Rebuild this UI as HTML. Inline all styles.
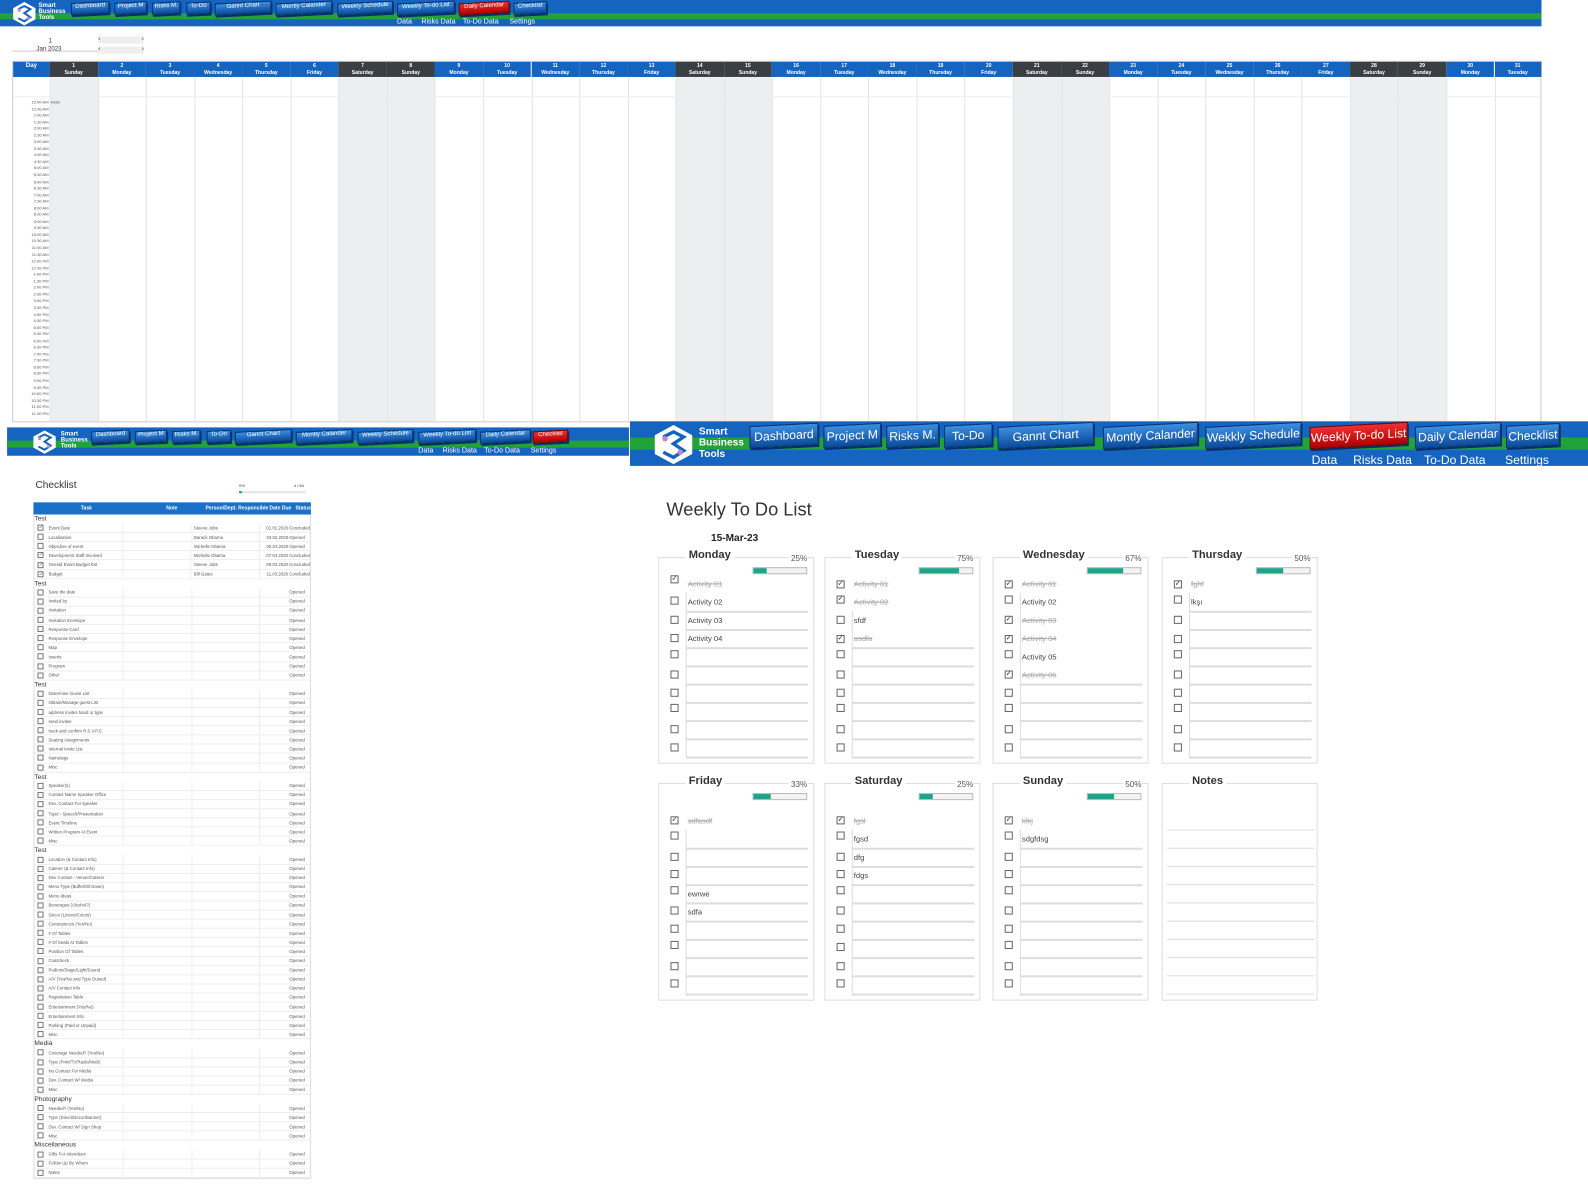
<!DOCTYPE html>
<html><head><meta charset="utf-8"><style>
*{margin:0;padding:0;box-sizing:border-box}
body{width:1588px;height:1191px;background:#fff;position:relative;overflow:hidden;font-family:"Liberation Sans",sans-serif;color:#333}
#w{position:absolute;left:0;top:0;width:1568px;height:1176px;transform:scale(1.0128);transform-origin:0 0}
.a{position:absolute}
.hdr{position:absolute;background:#1565c0;overflow:hidden}
.hdr .g{position:absolute;left:0;right:0;background:#22a33a}
.btn{position:absolute;background:linear-gradient(#3d8fe0,#0b4a9c);border:1px solid #0a3470;color:#fff;text-align:center;white-space:nowrap;box-shadow:1px 2px 0 #06306a;transform:skewY(-3deg);overflow:hidden}
.btn.red{background:linear-gradient(#f03030,#b00000);border-color:#700}
.lnk{position:absolute;color:#fff;white-space:nowrap}
.logo{position:absolute}
.lt{position:absolute;color:#fff;font-weight:bold;line-height:1}
.cal{position:absolute;left:12px;top:60px;width:1510px;height:357px;border:1px solid #ccc}
.ch{position:absolute;top:0;height:15px;background:#1565c0;color:#fff;text-align:center;font-size:5px;font-weight:bold;line-height:7px;padding-top:1px}
.ch.w{background:#3a3f44}
.cb{position:absolute;top:15px;bottom:0;border-left:1px solid #e4e4e4}
.cb.w{background:#eceef0}
.tl{position:absolute;left:8px;top:37px;font-size:4px;line-height:6.55px;color:#555;text-align:right;width:27px}
.ck{font-size:6px;position:absolute;left:33px;top:496px;width:274px}
.ck .h{background:#1a6fc9;color:#fff;height:12px;font-weight:bold;font-size:5px;display:flex;align-items:center}
.r{height:9.1px;display:flex;align-items:center;font-size:4.3px;color:#555;border-bottom:1px solid #eee}
.sec{height:9.1px;font-size:6.5px;color:#333;line-height:9.1px}
.r .x{width:6px;height:6px;border:0.8px solid #777;margin-left:3px;margin-right:5px;font-size:5px;line-height:5px;text-align:center}
.r .t{width:76px;border-right:1px solid #eee;height:100%;display:flex;align-items:center}
.r .n{width:70px;border-right:1px solid #eee;height:100%}
.r .p{width:70px;border-right:1px solid #eee;height:100%;display:flex;align-items:center;padding-left:2px}
.r .d{width:28px;text-align:right}
.r .s{width:22px;padding-left:1px}
.card{position:absolute;border:1.5px solid #ddd;width:154px}
.card .ti{position:absolute;left:26px;top:-9px;background:#fff;padding:0 3px;font-size:11px;font-weight:bold;color:#333}
.card .pc{position:absolute;right:6px;top:-4px;background:#fff;font-size:8px;color:#555;padding-left:2px}
.card .bar{position:absolute;left:92px;top:9px;width:54px;height:7px;border:1px solid #bbb;background:#f3f3f3}
.card .bar i{display:block;height:100%;background:#1fa38a}
.card .vl{position:absolute;left:26px;width:1px;background:#ddd}
.card .hl{position:absolute;left:26px;width:121px;height:1.5px;background:#ddd}
.card .cx{position:absolute;left:11px;width:8px;height:8px;border:1px solid #666;font-size:7px;line-height:6px;text-align:center;color:#222}
.card .it{position:absolute;left:28px;font-size:7.5px;color:#444}
.card .it.d{text-decoration:line-through;color:#aaa}
</style></head><body><div id="w">

<!-- top small header -->
<div class="hdr" style="left:0;top:0;width:1522px;height:26px">
<div class="g" style="top:13px;height:6px"></div>
<svg class="logo" style="left:12px;top:1px" width="24" height="25" viewBox="0 0 24 25"><path d="M12 1 L23 7 L23 18 L12 24 L1 18 L1 7Z" fill="#fff"/><path d="M6 8 L12 5 L18 8 L12 12 L18 16 L12 20 L6 17" fill="none" stroke="#1565c0" stroke-width="2"/><circle cx="7" cy="9" r="1.6" fill="#b58ad0"/><circle cx="16" cy="17" r="1.6" fill="#b58ad0"/></svg>
<div class="lt" style="left:38px;top:3px;font-size:6px">Smart<br>Business<br>Tools</div>
<div class="btn" style="left:70px;top:2px;width:38px;height:12px;font-size:6px">Dashboard</div>
<div class="btn" style="left:113px;top:2px;width:32px;height:12px;font-size:6px">Project M</div>
<div class="btn" style="left:150px;top:2px;width:28px;height:12px;font-size:6px">Risks M.</div>
<div class="btn" style="left:184px;top:2px;width:24px;height:12px;font-size:6px">To-Do</div>
<div class="btn" style="left:212px;top:2px;width:56px;height:12px;font-size:6px">Gannt Chart</div>
<div class="btn" style="left:272px;top:2px;width:56px;height:12px;font-size:6px">Montly Calander</div>
<div class="btn" style="left:333px;top:2px;width:55px;height:12px;font-size:6px">Weekly Schedule</div>
<div class="btn" style="left:392px;top:2px;width:57px;height:12px;font-size:6px">Weekly To-do List</div>
<div class="btn red" style="left:453px;top:2px;width:50px;height:12px;font-size:6px">Daily Calendar</div>
<div class="btn" style="left:507px;top:2px;width:33px;height:12px;font-size:6px">Checklist</div>
<div class="lnk" style="left:392px;top:18px;font-size:7px">Data</div>
<div class="lnk" style="left:416px;top:18px;font-size:7px">Risks Data</div>
<div class="lnk" style="left:457px;top:18px;font-size:7px">To-Do Data</div>
<div class="lnk" style="left:503px;top:18px;font-size:7px">Settings</div>
</div>

<div class="a" style="left:48px;top:38px;font-size:6px">1</div>
<div class="a" style="left:12px;top:50px;width:85px;border-top:1px solid #ccc"></div>
<div class="a" style="left:36px;top:46px;font-size:6px">Jan 2023</div>
<div class="a" style="left:97px;top:36px;width:45px;height:7px;background:#eee;font-size:6px;line-height:7px">&lsaquo;<span style="float:right">&rsaquo;</span></div>
<div class="a" style="left:97px;top:46px;width:45px;height:7px;background:#eee;font-size:6px;line-height:7px">&lsaquo;<span style="float:right">&rsaquo;</span></div>

<div class="cal">
<div class="ch" style="left:0;width:36px;font-size:6px">Day</div>
<div class="ch w" style="left:36px;width:47.55px">1<br>Sunday</div><div class="cb w" style="left:36px;width:47.55px"></div>
<div class="ch" style="left:83.55px;width:47.55px">2<br>Monday</div><div class="cb" style="left:83.55px;width:47.55px"></div>
<div class="ch" style="left:131.1px;width:47.55px">3<br>Tuesday</div><div class="cb" style="left:131.1px;width:47.55px"></div>
<div class="ch" style="left:178.65px;width:47.55px">4<br>Wednesday</div><div class="cb" style="left:178.65px;width:47.55px"></div>
<div class="ch" style="left:226.2px;width:47.55px">5<br>Thursday</div><div class="cb" style="left:226.2px;width:47.55px"></div>
<div class="ch" style="left:273.75px;width:47.55px">6<br>Friday</div><div class="cb" style="left:273.75px;width:47.55px"></div>
<div class="ch w" style="left:321.3px;width:47.55px">7<br>Saturday</div><div class="cb w" style="left:321.3px;width:47.55px"></div>
<div class="ch w" style="left:368.85px;width:47.55px">8<br>Sunday</div><div class="cb w" style="left:368.85px;width:47.55px"></div>
<div class="ch" style="left:416.4px;width:47.55px">9<br>Monday</div><div class="cb" style="left:416.4px;width:47.55px"></div>
<div class="ch" style="left:463.95px;width:47.55px">10<br>Tuesday</div><div class="cb" style="left:463.95px;width:47.55px"></div>
<div class="ch" style="left:511.5px;width:47.55px">11<br>Wednesday</div><div class="cb" style="left:511.5px;width:47.55px"></div>
<div class="ch" style="left:559.05px;width:47.55px">12<br>Thursday</div><div class="cb" style="left:559.05px;width:47.55px"></div>
<div class="ch" style="left:606.6px;width:47.55px">13<br>Friday</div><div class="cb" style="left:606.6px;width:47.55px"></div>
<div class="ch w" style="left:654.15px;width:47.55px">14<br>Saturday</div><div class="cb w" style="left:654.15px;width:47.55px"></div>
<div class="ch w" style="left:701.7px;width:47.55px">15<br>Sunday</div><div class="cb w" style="left:701.7px;width:47.55px"></div>
<div class="ch" style="left:749.25px;width:47.55px">16<br>Monday</div><div class="cb" style="left:749.25px;width:47.55px"></div>
<div class="ch" style="left:796.8px;width:47.55px">17<br>Tuesday</div><div class="cb" style="left:796.8px;width:47.55px"></div>
<div class="ch" style="left:844.35px;width:47.55px">18<br>Wednesday</div><div class="cb" style="left:844.35px;width:47.55px"></div>
<div class="ch" style="left:891.9px;width:47.55px">19<br>Thursday</div><div class="cb" style="left:891.9px;width:47.55px"></div>
<div class="ch" style="left:939.45px;width:47.55px">20<br>Friday</div><div class="cb" style="left:939.45px;width:47.55px"></div>
<div class="ch w" style="left:987px;width:47.55px">21<br>Saturday</div><div class="cb w" style="left:987px;width:47.55px"></div>
<div class="ch w" style="left:1034.55px;width:47.55px">22<br>Sunday</div><div class="cb w" style="left:1034.55px;width:47.55px"></div>
<div class="ch" style="left:1082.1px;width:47.55px">23<br>Monday</div><div class="cb" style="left:1082.1px;width:47.55px"></div>
<div class="ch" style="left:1129.65px;width:47.55px">24<br>Tuesday</div><div class="cb" style="left:1129.65px;width:47.55px"></div>
<div class="ch" style="left:1177.2px;width:47.55px">25<br>Wednesday</div><div class="cb" style="left:1177.2px;width:47.55px"></div>
<div class="ch" style="left:1224.75px;width:47.55px">26<br>Thursday</div><div class="cb" style="left:1224.75px;width:47.55px"></div>
<div class="ch" style="left:1272.3px;width:47.55px">27<br>Friday</div><div class="cb" style="left:1272.3px;width:47.55px"></div>
<div class="ch w" style="left:1319.85px;width:47.55px">28<br>Saturday</div><div class="cb w" style="left:1319.85px;width:47.55px"></div>
<div class="ch w" style="left:1367.4px;width:47.55px">29<br>Sunday</div><div class="cb w" style="left:1367.4px;width:47.55px"></div>
<div class="ch" style="left:1414.95px;width:47.55px">30<br>Monday</div><div class="cb" style="left:1414.95px;width:47.55px"></div>
<div class="ch" style="left:1462.5px;width:46px">31<br>Tuesday</div><div class="cb" style="left:1462.5px;width:46px"></div>
<div class="a" style="left:0;top:34px;width:1508px;border-top:1px solid #eee"></div>
<div class="tl">12:00 AM<br>12:30 AM<br>1:00 AM<br>1:30 AM<br>2:00 AM<br>2:30 AM<br>3:00 AM<br>3:30 AM<br>4:00 AM<br>4:30 AM<br>5:00 AM<br>5:30 AM<br>6:00 AM<br>6:30 AM<br>7:00 AM<br>7:30 AM<br>8:00 AM<br>8:30 AM<br>9:00 AM<br>9:30 AM<br>10:00 AM<br>10:30 AM<br>11:00 AM<br>11:30 AM<br>12:00 PM<br>12:30 PM<br>1:00 PM<br>1:30 PM<br>2:00 PM<br>2:30 PM<br>3:00 PM<br>3:30 PM<br>4:00 PM<br>4:30 PM<br>5:00 PM<br>5:30 PM<br>6:00 PM<br>6:30 PM<br>7:00 PM<br>7:30 PM<br>8:00 PM<br>8:30 PM<br>9:00 PM<br>9:30 PM<br>10:00 PM<br>10:30 PM<br>11:00 PM<br>11:30 PM</div>
<div class="a" style="left:37px;top:37px;font-size:4px;color:#555">Hello</div>
</div>

<!-- second small header -->
<div class="hdr" style="left:7px;top:422px;width:614px;height:28px">
<div class="g" style="top:13px;height:7px"></div>
<svg class="logo" style="left:25px;top:2px" width="24" height="25" viewBox="0 0 24 25"><path d="M12 1 L23 7 L23 18 L12 24 L1 18 L1 7Z" fill="#fff"/><path d="M6 8 L12 5 L18 8 L12 12 L18 16 L12 20 L6 17" fill="none" stroke="#1565c0" stroke-width="2"/><circle cx="7" cy="9" r="1.6" fill="#b58ad0"/><circle cx="16" cy="17" r="1.6" fill="#b58ad0"/></svg>
<div class="lt" style="left:53px;top:4px;font-size:6px">Smart<br>Business<br>Tools</div>
<div class="btn" style="left:83px;top:3px;width:38px;height:12px;font-size:6px">Dashboard</div>
<div class="btn" style="left:126px;top:3px;width:32px;height:12px;font-size:6px">Project M</div>
<div class="btn" style="left:163px;top:3px;width:28px;height:12px;font-size:6px">Risks M.</div>
<div class="btn" style="left:197px;top:3px;width:24px;height:12px;font-size:6px">To-Do</div>
<div class="btn" style="left:225px;top:3px;width:56px;height:12px;font-size:6px">Gannt Chart</div>
<div class="btn" style="left:285px;top:3px;width:56px;height:12px;font-size:6px">Montly Calander</div>
<div class="btn" style="left:346px;top:3px;width:55px;height:12px;font-size:6px">Weekly Schedule</div>
<div class="btn" style="left:406px;top:3px;width:57px;height:12px;font-size:6px">Weekly To-do List</div>
<div class="btn" style="left:467px;top:3px;width:50px;height:12px;font-size:6px">Daily Calendar</div>
<div class="btn red" style="left:519px;top:3px;width:35px;height:12px;font-size:6px">Checklist</div>
<div class="lnk" style="left:406px;top:20px;font-size:7px">Data</div>
<div class="lnk" style="left:430px;top:20px;font-size:7px">Risks Data</div>
<div class="lnk" style="left:471px;top:20px;font-size:7px">To-Do Data</div>
<div class="lnk" style="left:517px;top:20px;font-size:7px">Settings</div>
</div>

<!-- big header -->
<div class="hdr" style="left:622px;top:416px;width:946px;height:44px">
<div class="g" style="top:16px;height:12px"></div>
<svg class="logo" style="left:22px;top:2px" width="42" height="42" viewBox="0 0 24 25"><path d="M12 1 L23 7 L23 18 L12 24 L1 18 L1 7Z" fill="#fff"/><path d="M6 8 L12 5 L18 8 L12 12 L18 16 L12 20 L6 17" fill="none" stroke="#1565c0" stroke-width="2"/><circle cx="7" cy="9" r="1.6" fill="#b58ad0"/><circle cx="16" cy="17" r="1.6" fill="#b58ad0"/></svg>
<div class="lt" style="left:68px;top:5px;font-size:10px;line-height:11px">Smart<br>Business<br>Tools</div>
<div class="btn" style="left:118px;top:3px;width:68px;height:22px;font-size:12px;line-height:20px">Dashboard</div>
<div class="btn" style="left:191px;top:3px;width:57px;height:22px;font-size:12px;line-height:20px">Project M</div>
<div class="btn" style="left:253px;top:3px;width:52px;height:22px;font-size:12px;line-height:20px">Risks M.</div>
<div class="btn" style="left:310px;top:3px;width:48px;height:22px;font-size:12px;line-height:20px">To-Do</div>
<div class="btn" style="left:363px;top:3px;width:95px;height:22px;font-size:12px;line-height:20px">Gannt Chart</div>
<div class="btn" style="left:467px;top:3px;width:94px;height:22px;font-size:12px;line-height:20px">Montly Calander</div>
<div class="btn" style="left:568px;top:3px;width:95px;height:22px;font-size:12px;line-height:20px">Wekkly Schedule</div>
<div class="btn red" style="left:671px;top:3px;width:97px;height:22px;font-size:12px;line-height:20px">Weekly To-do List</div>
<div class="btn" style="left:775px;top:3px;width:85px;height:22px;font-size:12px;line-height:20px">Daily Calendar</div>
<div class="btn" style="left:865px;top:3px;width:53px;height:22px;font-size:12px;line-height:20px">Checklist</div>
<div class="lnk" style="left:673px;top:31px;font-size:12px">Data</div>
<div class="lnk" style="left:714px;top:31px;font-size:12px">Risks Data</div>
<div class="lnk" style="left:784px;top:31px;font-size:12px">To-Do Data</div>
<div class="lnk" style="left:864px;top:31px;font-size:12px">Settings</div>
</div>

<!-- checklist -->
<div class="a" style="left:35px;top:474px;font-size:10px;color:#333">Checklist</div>
<div class="a" style="left:236px;top:477px;font-size:4px">0%</div>
<div class="a" style="left:290px;top:477px;font-size:4px">4 / 64</div>
<div class="a" style="left:236px;top:485px;width:66px;height:2px;background:#e5e5e5"><div style="width:3px;height:2px;background:#1fa38a"></div></div>
<div class="ck">
<div class="h"><span style="width:114px;text-align:center">Task</span><span style="width:70px;text-align:center">Note</span><span style="width:70px;text-align:center">Person/Dept. Responsible</span><span style="width:28px">Date Due</span><span>Status</span></div>
<div style="border:1px solid #ddd;border-top:0">
<div class="sec">Test</div>
<div class="r"><i class="x">✓</i><span class="t">Event Date</span><span class="n"></span><span class="p">Steeve Jobs</span><span class="d">01.01.2020</span><span class="s">Concluded</span></div>
<div class="r"><i class="x"></i><span class="t">Localisation</span><span class="n"></span><span class="p">Barack Obama</span><span class="d">03.02.2020</span><span class="s">Opened</span></div>
<div class="r"><i class="x"></i><span class="t">Objective of event</span><span class="n"></span><span class="p">Michelle Obama</span><span class="d">05.03.2020</span><span class="s">Opened</span></div>
<div class="r"><i class="x">✓</i><span class="t">Development Staff Involved</span><span class="n"></span><span class="p">Michelle Obama</span><span class="d">07.03.2020</span><span class="s">Concluded</span></div>
<div class="r"><i class="x">✓</i><span class="t">Overall Event Budget Est</span><span class="n"></span><span class="p">Steeve Jobs</span><span class="d">09.03.2020</span><span class="s">Concluded</span></div>
<div class="r"><i class="x">✓</i><span class="t">Budget</span><span class="n"></span><span class="p">Bill Gates</span><span class="d">11.03.2020</span><span class="s">Concluded</span></div>
<div class="sec">Test</div>
<div class="r"><i class="x"></i><span class="t">Save the date</span><span class="n"></span><span class="p"></span><span class="d"></span><span class="s">Opened</span></div>
<div class="r"><i class="x"></i><span class="t">Invited by</span><span class="n"></span><span class="p"></span><span class="d"></span><span class="s">Opened</span></div>
<div class="r"><i class="x"></i><span class="t">Invitation</span><span class="n"></span><span class="p"></span><span class="d"></span><span class="s">Opened</span></div>
<div class="r"><i class="x"></i><span class="t">Invitation Envelope</span><span class="n"></span><span class="p"></span><span class="d"></span><span class="s">Opened</span></div>
<div class="r"><i class="x"></i><span class="t">Response Card</span><span class="n"></span><span class="p"></span><span class="d"></span><span class="s">Opened</span></div>
<div class="r"><i class="x"></i><span class="t">Response Envelope</span><span class="n"></span><span class="p"></span><span class="d"></span><span class="s">Opened</span></div>
<div class="r"><i class="x"></i><span class="t">Map</span><span class="n"></span><span class="p"></span><span class="d"></span><span class="s">Opened</span></div>
<div class="r"><i class="x"></i><span class="t">Inserts</span><span class="n"></span><span class="p"></span><span class="d"></span><span class="s">Opened</span></div>
<div class="r"><i class="x"></i><span class="t">Program</span><span class="n"></span><span class="p"></span><span class="d"></span><span class="s">Opened</span></div>
<div class="r"><i class="x"></i><span class="t">Other</span><span class="n"></span><span class="p"></span><span class="d"></span><span class="s">Opened</span></div>
<div class="sec">Test</div>
<div class="r"><i class="x"></i><span class="t">Determine Guest List</span><span class="n"></span><span class="p"></span><span class="d"></span><span class="s">Opened</span></div>
<div class="r"><i class="x"></i><span class="t">Obtain/Manage guest List</span><span class="n"></span><span class="p"></span><span class="d"></span><span class="s">Opened</span></div>
<div class="r"><i class="x"></i><span class="t">address invites hand or type</span><span class="n"></span><span class="p"></span><span class="d"></span><span class="s">Opened</span></div>
<div class="r"><i class="x"></i><span class="t">send invites</span><span class="n"></span><span class="p"></span><span class="d"></span><span class="s">Opened</span></div>
<div class="r"><i class="x"></i><span class="t">track and confirm R.S.V.P.S</span><span class="n"></span><span class="p"></span><span class="d"></span><span class="s">Opened</span></div>
<div class="r"><i class="x"></i><span class="t">Seating Assignments</span><span class="n"></span><span class="p"></span><span class="d"></span><span class="s">Opened</span></div>
<div class="r"><i class="x"></i><span class="t">Internal Invite List</span><span class="n"></span><span class="p"></span><span class="d"></span><span class="s">Opened</span></div>
<div class="r"><i class="x"></i><span class="t">Nametags</span><span class="n"></span><span class="p"></span><span class="d"></span><span class="s">Opened</span></div>
<div class="r"><i class="x"></i><span class="t">Misc</span><span class="n"></span><span class="p"></span><span class="d"></span><span class="s">Opened</span></div>
<div class="sec">Test</div>
<div class="r"><i class="x"></i><span class="t">Speaker(s)</span><span class="n"></span><span class="p"></span><span class="d"></span><span class="s">Opened</span></div>
<div class="r"><i class="x"></i><span class="t">Contact Name Speaker Office</span><span class="n"></span><span class="p"></span><span class="d"></span><span class="s">Opened</span></div>
<div class="r"><i class="x"></i><span class="t">Dev. Contact For speaker</span><span class="n"></span><span class="p"></span><span class="d"></span><span class="s">Opened</span></div>
<div class="r"><i class="x"></i><span class="t">Topic - Speech/Presentation</span><span class="n"></span><span class="p"></span><span class="d"></span><span class="s">Opened</span></div>
<div class="r"><i class="x"></i><span class="t">Event Timeline</span><span class="n"></span><span class="p"></span><span class="d"></span><span class="s">Opened</span></div>
<div class="r"><i class="x"></i><span class="t">Written Program At Event</span><span class="n"></span><span class="p"></span><span class="d"></span><span class="s">Opened</span></div>
<div class="r"><i class="x"></i><span class="t">Misc</span><span class="n"></span><span class="p"></span><span class="d"></span><span class="s">Opened</span></div>
<div class="sec">Test</div>
<div class="r"><i class="x"></i><span class="t">Location (&amp; Contact Info)</span><span class="n"></span><span class="p"></span><span class="d"></span><span class="s">Opened</span></div>
<div class="r"><i class="x"></i><span class="t">Caterer (&amp; Contact Info)</span><span class="n"></span><span class="p"></span><span class="d"></span><span class="s">Opened</span></div>
<div class="r"><i class="x"></i><span class="t">Dev Contact - Venue/Caterer</span><span class="n"></span><span class="p"></span><span class="d"></span><span class="s">Opened</span></div>
<div class="r"><i class="x"></i><span class="t">Menu Type (Buffet/Sit Down)</span><span class="n"></span><span class="p"></span><span class="d"></span><span class="s">Opened</span></div>
<div class="r"><i class="x"></i><span class="t">Menu Ideas</span><span class="n"></span><span class="p"></span><span class="d"></span><span class="s">Opened</span></div>
<div class="r"><i class="x"></i><span class="t">Beverages (Alcohol?)</span><span class="n"></span><span class="p"></span><span class="d"></span><span class="s">Opened</span></div>
<div class="r"><i class="x"></i><span class="t">Décor (Linens/Colors)</span><span class="n"></span><span class="p"></span><span class="d"></span><span class="s">Opened</span></div>
<div class="r"><i class="x"></i><span class="t">Centerpieces (Yes/No)</span><span class="n"></span><span class="p"></span><span class="d"></span><span class="s">Opened</span></div>
<div class="r"><i class="x"></i><span class="t"># Of Tables</span><span class="n"></span><span class="p"></span><span class="d"></span><span class="s">Opened</span></div>
<div class="r"><i class="x"></i><span class="t"># Of Seats At Tables</span><span class="n"></span><span class="p"></span><span class="d"></span><span class="s">Opened</span></div>
<div class="r"><i class="x"></i><span class="t">Position Of Tables</span><span class="n"></span><span class="p"></span><span class="d"></span><span class="s">Opened</span></div>
<div class="r"><i class="x"></i><span class="t">Coatcheck</span><span class="n"></span><span class="p"></span><span class="d"></span><span class="s">Opened</span></div>
<div class="r"><i class="x"></i><span class="t">Podium/Stage/Light/Sound</span><span class="n"></span><span class="p"></span><span class="d"></span><span class="s">Opened</span></div>
<div class="r"><i class="x"></i><span class="t">A/V (Yes/No and Type Dused)</span><span class="n"></span><span class="p"></span><span class="d"></span><span class="s">Opened</span></div>
<div class="r"><i class="x"></i><span class="t">A/V Contact Info</span><span class="n"></span><span class="p"></span><span class="d"></span><span class="s">Opened</span></div>
<div class="r"><i class="x"></i><span class="t">Registration Table</span><span class="n"></span><span class="p"></span><span class="d"></span><span class="s">Opened</span></div>
<div class="r"><i class="x"></i><span class="t">Entertainment (Yes/No)</span><span class="n"></span><span class="p"></span><span class="d"></span><span class="s">Opened</span></div>
<div class="r"><i class="x"></i><span class="t">Entertainment Info</span><span class="n"></span><span class="p"></span><span class="d"></span><span class="s">Opened</span></div>
<div class="r"><i class="x"></i><span class="t">Parking (Paid or Unpaid)</span><span class="n"></span><span class="p"></span><span class="d"></span><span class="s">Opened</span></div>
<div class="r"><i class="x"></i><span class="t">Misc</span><span class="n"></span><span class="p"></span><span class="d"></span><span class="s">Opened</span></div>
<div class="sec">Media</div>
<div class="r"><i class="x"></i><span class="t">Coverage Needed? (Yes/No)</span><span class="n"></span><span class="p"></span><span class="d"></span><span class="s">Opened</span></div>
<div class="r"><i class="x"></i><span class="t">Type (Print/TV/Radio/Web)</span><span class="n"></span><span class="p"></span><span class="d"></span><span class="s">Opened</span></div>
<div class="r"><i class="x"></i><span class="t">Nu Contact For Media</span><span class="n"></span><span class="p"></span><span class="d"></span><span class="s">Opened</span></div>
<div class="r"><i class="x"></i><span class="t">Dev. Contact W/ Media</span><span class="n"></span><span class="p"></span><span class="d"></span><span class="s">Opened</span></div>
<div class="r"><i class="x"></i><span class="t">Misc</span><span class="n"></span><span class="p"></span><span class="d"></span><span class="s">Opened</span></div>
<div class="sec">Photography</div>
<div class="r"><i class="x"></i><span class="t">Needed? (Yes/No)</span><span class="n"></span><span class="p"></span><span class="d"></span><span class="s">Opened</span></div>
<div class="r"><i class="x"></i><span class="t">Type (Direct/Décor/Banner)</span><span class="n"></span><span class="p"></span><span class="d"></span><span class="s">Opened</span></div>
<div class="r"><i class="x"></i><span class="t">Dev. Contact W/ Sign Shop</span><span class="n"></span><span class="p"></span><span class="d"></span><span class="s">Opened</span></div>
<div class="r"><i class="x"></i><span class="t">Misc</span><span class="n"></span><span class="p"></span><span class="d"></span><span class="s">Opened</span></div>
<div class="sec">Miscellaneous</div>
<div class="r"><i class="x"></i><span class="t">Gifts For Attendees</span><span class="n"></span><span class="p"></span><span class="d"></span><span class="s">Opened</span></div>
<div class="r"><i class="x"></i><span class="t">Follow Up By Whom</span><span class="n"></span><span class="p"></span><span class="d"></span><span class="s">Opened</span></div>
<div class="r"><i class="x"></i><span class="t">Notes</span><span class="n"></span><span class="p"></span><span class="d"></span><span class="s">Opened</span></div>
</div></div>

<!-- weekly -->
<div class="a" style="left:658px;top:493px;font-size:18px;color:#333">Weekly To Do List</div>
<div class="a" style="left:702px;top:526px;font-size:10px;font-weight:bold;color:#222">15-Mar-23</div>

<div class="card" style="left:650px;top:550px;height:204px">
<div class="ti">Monday</div><div class="pc">25%</div><div class="bar"><i style="width:25%"></i></div>
<div class="vl" style="top:34px;height:162px"></div>
<div class="hl" style="top:52px"></div><div class="hl" style="top:70px"></div><div class="hl" style="top:88px"></div><div class="hl" style="top:106px"></div><div class="hl" style="top:124px"></div><div class="hl" style="top:142px"></div><div class="hl" style="top:160px"></div><div class="hl" style="top:178px"></div><div class="hl" style="top:196px"></div>
<div class="cx" style="top:17px">✓</div><div class="cx" style="top:38px"></div><div class="cx" style="top:57px"></div><div class="cx" style="top:75px"></div><div class="cx" style="top:91px"></div><div class="cx" style="top:111px"></div><div class="cx" style="top:129px"></div><div class="cx" style="top:144px"></div><div class="cx" style="top:165px"></div><div class="cx" style="top:183px"></div>
<div class="it d" style="top:21px">Activity 01</div><div class="it" style="top:39px">Activity 02</div><div class="it" style="top:57px">Activity 03</div><div class="it" style="top:75px">Activity 04</div>
</div>
<div class="card" style="left:814px;top:550px;height:204px">
<div class="ti">Tuesday</div><div class="pc">75%</div><div class="bar"><i style="width:75%"></i></div>
<div class="vl" style="top:52px;height:144px"></div>
<div class="hl" style="top:88px"></div><div class="hl" style="top:106px"></div><div class="hl" style="top:124px"></div><div class="hl" style="top:142px"></div><div class="hl" style="top:160px"></div><div class="hl" style="top:178px"></div><div class="hl" style="top:196px"></div>
<div class="cx" style="top:22px">✓</div><div class="cx" style="top:37px">✓</div><div class="cx" style="top:57px"></div><div class="cx" style="top:76px">✓</div><div class="cx" style="top:91px"></div><div class="cx" style="top:111px"></div><div class="cx" style="top:129px"></div><div class="cx" style="top:144px"></div><div class="cx" style="top:165px"></div><div class="cx" style="top:183px"></div>
<div class="it d" style="top:21px">Activity 01</div><div class="it d" style="top:39px">Activity 02</div><div class="it" style="top:57px">sfdf</div><div class="it d" style="top:75px">asdfa</div>
</div>
<div class="card" style="left:980px;top:550px;height:204px">
<div class="ti">Wednesday</div><div class="pc">67%</div><div class="bar"><i style="width:67%"></i></div>
<div class="vl" style="top:34px;height:162px"></div>
<div class="hl" style="top:124px"></div><div class="hl" style="top:142px"></div><div class="hl" style="top:160px"></div><div class="hl" style="top:178px"></div><div class="hl" style="top:196px"></div>
<div class="cx" style="top:22px">✓</div><div class="cx" style="top:37px"></div><div class="cx" style="top:57px">✓</div><div class="cx" style="top:76px">✓</div><div class="cx" style="top:91px"></div><div class="cx" style="top:111px">✓</div><div class="cx" style="top:129px"></div><div class="cx" style="top:144px"></div><div class="cx" style="top:165px"></div><div class="cx" style="top:183px"></div>
<div class="it d" style="top:21px">Activity 01</div><div class="it" style="top:39px">Activity 02</div><div class="it d" style="top:57px">Activity 03</div><div class="it d" style="top:75px">Activity 04</div><div class="it" style="top:93px">Activity 05</div><div class="it d" style="top:111px">Activity 06</div>
</div>
<div class="card" style="left:1147px;top:550px;height:204px">
<div class="ti">Thursday</div><div class="pc">50%</div><div class="bar"><i style="width:50%"></i></div>
<div class="vl" style="top:34px;height:162px"></div>
<div class="hl" style="top:52px"></div><div class="hl" style="top:70px"></div><div class="hl" style="top:88px"></div><div class="hl" style="top:106px"></div><div class="hl" style="top:124px"></div><div class="hl" style="top:142px"></div><div class="hl" style="top:160px"></div><div class="hl" style="top:178px"></div><div class="hl" style="top:196px"></div>
<div class="cx" style="top:22px">✓</div><div class="cx" style="top:37px"></div><div class="cx" style="top:57px"></div><div class="cx" style="top:76px"></div><div class="cx" style="top:91px"></div><div class="cx" style="top:111px"></div><div class="cx" style="top:129px"></div><div class="cx" style="top:144px"></div><div class="cx" style="top:165px"></div><div class="cx" style="top:183px"></div>
<div class="it d" style="top:21px">fghf</div><div class="it" style="top:39px">lkşı</div>
</div>

<div class="card" style="left:650px;top:773px;height:215px">
<div class="ti">Friday</div><div class="pc">33%</div><div class="bar"><i style="width:33%"></i></div>
<div class="vl" style="top:45px;height:162px"></div>
<div class="hl" style="top:63px"></div><div class="hl" style="top:81px"></div><div class="hl" style="top:99px"></div><div class="hl" style="top:117px"></div><div class="hl" style="top:135px"></div><div class="hl" style="top:153px"></div><div class="hl" style="top:171px"></div><div class="hl" style="top:189px"></div><div class="hl" style="top:207px"></div>
<div class="cx" style="top:32px">✓</div><div class="cx" style="top:47px"></div><div class="cx" style="top:68px"></div><div class="cx" style="top:85px"></div><div class="cx" style="top:101px"></div><div class="cx" style="top:121px"></div><div class="cx" style="top:139px"></div><div class="cx" style="top:155px"></div><div class="cx" style="top:176px"></div><div class="cx" style="top:193px"></div>
<div class="it d" style="top:32px">sdfasdf</div><div class="it" style="top:104px">ewrwe</div><div class="it" style="top:122px">sdfa</div>
</div>
<div class="card" style="left:814px;top:773px;height:215px">
<div class="ti">Saturday</div><div class="pc">25%</div><div class="bar"><i style="width:25%"></i></div>
<div class="vl" style="top:45px;height:162px"></div>
<div class="hl" style="top:63px"></div><div class="hl" style="top:81px"></div><div class="hl" style="top:99px"></div><div class="hl" style="top:117px"></div><div class="hl" style="top:135px"></div><div class="hl" style="top:153px"></div><div class="hl" style="top:171px"></div><div class="hl" style="top:189px"></div><div class="hl" style="top:207px"></div>
<div class="cx" style="top:32px">✓</div><div class="cx" style="top:47px"></div><div class="cx" style="top:68px"></div><div class="cx" style="top:85px"></div><div class="cx" style="top:101px"></div><div class="cx" style="top:121px"></div><div class="cx" style="top:139px"></div><div class="cx" style="top:157px"></div><div class="cx" style="top:176px"></div><div class="cx" style="top:193px"></div>
<div class="it d" style="top:32px">fgsl</div><div class="it" style="top:50px">fgsd</div><div class="it" style="top:68px">dfg</div><div class="it" style="top:86px">fdgs</div>
</div>
<div class="card" style="left:980px;top:773px;height:215px">
<div class="ti">Sunday</div><div class="pc">50%</div><div class="bar"><i style="width:50%"></i></div>
<div class="vl" style="top:45px;height:162px"></div>
<div class="hl" style="top:63px"></div><div class="hl" style="top:81px"></div><div class="hl" style="top:99px"></div><div class="hl" style="top:117px"></div><div class="hl" style="top:135px"></div><div class="hl" style="top:153px"></div><div class="hl" style="top:171px"></div><div class="hl" style="top:189px"></div><div class="hl" style="top:207px"></div>
<div class="cx" style="top:32px">✓</div><div class="cx" style="top:47px"></div><div class="cx" style="top:68px"></div><div class="cx" style="top:85px"></div><div class="cx" style="top:101px"></div><div class="cx" style="top:121px"></div><div class="cx" style="top:139px"></div><div class="cx" style="top:155px"></div><div class="cx" style="top:176px"></div><div class="cx" style="top:193px"></div>
<div class="it d" style="top:32px">klkj</div><div class="it" style="top:50px">sdgfdsg</div>
</div>
<div class="card" style="left:1147px;top:773px;height:215px">
<div class="ti">Notes</div>
<div class="hl" style="left:4px;width:146px;top:45px;height:1px"></div><div class="hl" style="left:4px;width:146px;top:63px;height:1px"></div><div class="hl" style="left:4px;width:146px;top:81px;height:1px"></div><div class="hl" style="left:4px;width:146px;top:99px;height:1px"></div><div class="hl" style="left:4px;width:146px;top:117px;height:1px"></div><div class="hl" style="left:4px;width:146px;top:135px;height:1px"></div><div class="hl" style="left:4px;width:146px;top:153px;height:1px"></div><div class="hl" style="left:4px;width:146px;top:171px;height:1px"></div><div class="hl" style="left:4px;width:146px;top:189px;height:1px"></div><div class="hl" style="left:4px;width:146px;top:207px;height:1px"></div>
</div>
</div></body></html>
